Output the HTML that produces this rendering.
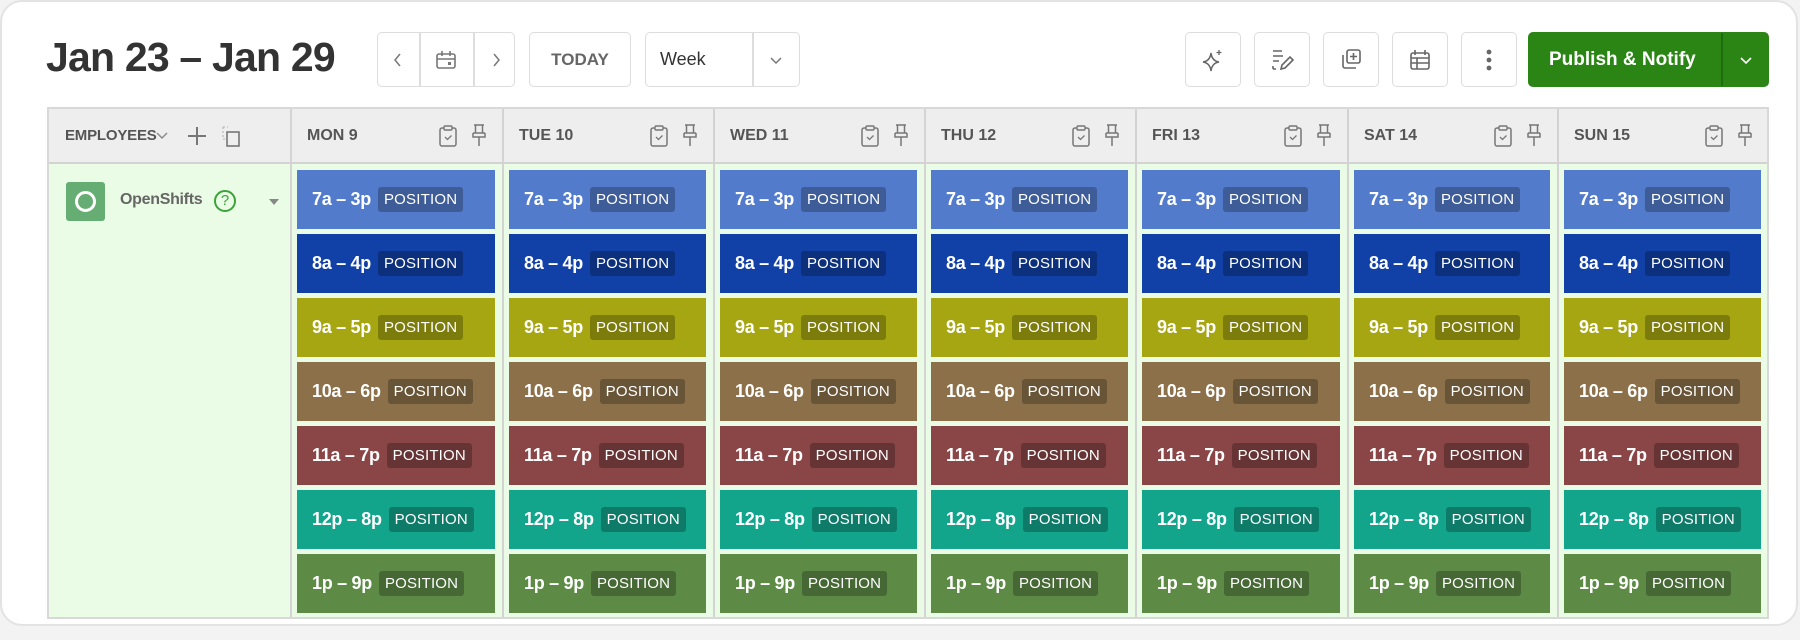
<!DOCTYPE html>
<html><head><meta charset="utf-8"><style>
*{box-sizing:border-box;margin:0;padding:0}
body{width:1800px;height:640px;background:#f3f3f3;font-family:"Liberation Sans",sans-serif;position:relative;overflow:hidden}
.card{position:absolute;left:0;top:0;width:1798px;height:626px;background:#fff;border:2px solid #e3e3e3;border-radius:22px;}
.abs{position:absolute}
.title{left:46px;top:34px;font-size:41px;font-weight:bold;color:#333;letter-spacing:-0.8px}
.btn{position:absolute;top:32px;height:55px;border:1.5px solid #ddd;border-radius:5px;background:#fff;display:flex;align-items:center;justify-content:center;color:#666}
.vd{position:absolute;top:0;bottom:0;width:1.5px;background:#ddd}
.grid{position:absolute;left:47px;top:107px;width:1722px;height:512px;border:2px solid #d8d8d8;background:#eafce5}
.hdr{position:absolute;left:0;top:0;right:0;height:55px;background:#eeeeee;border-bottom:2px solid #d3d3d3}
.col{position:absolute;top:0;bottom:0;border-left:2px solid #d3d3d3}
.dh{position:absolute;top:18px;font-size:16px;font-weight:bold;color:#555}
.shift{position:absolute;height:59px;color:#fff;display:flex;align-items:center;padding-left:15px;font-size:18px;font-weight:bold;letter-spacing:-0.3px;white-space:nowrap}
.badge{margin-left:7px;background:rgba(0,0,0,0.25);border-radius:3px;font-weight:normal;font-size:15px;padding:4px 6px;letter-spacing:0.2px}
svg{display:block}
</style></head><body>
<div class="card"></div>
<div class="abs title">Jan 23 – Jan 29</div>

<div class="btn" style="left:377px;width:138px">
 <div class="vd" style="left:41px"></div><div class="vd" style="left:95px"></div>
 <svg class="abs" style="left:14px;top:18px" width="12" height="18"><path d="M8 3 L3 9 L8 15" stroke="#777" stroke-width="1.5" fill="none"/></svg>
 <svg class="abs" style="left:56px;top:15px" width="24" height="24"><rect x="3" y="6" width="18" height="14" rx="2" stroke="#777" stroke-width="1.6" fill="none"/><path d="M3 11H21M8 3v5M16 3v5" stroke="#777" stroke-width="1.6"/><rect x="14" y="14" width="3" height="3" fill="#777"/></svg>
 <svg class="abs" style="left:112px;top:18px" width="12" height="18"><path d="M4 3 L9 9 L4 15" stroke="#777" stroke-width="1.5" fill="none"/></svg>
</div>
<div class="btn" style="left:529px;width:102px;font-size:17px;font-weight:bold;color:#666">TODAY</div>
<div class="btn" style="left:645px;width:155px;justify-content:flex-start;padding-left:14px;font-size:18px;color:#333">Week
 <div class="vd" style="left:106px"></div>
 <svg class="abs" style="left:122px;top:21px" width="16" height="12"><path d="M3 4 L8 9 L13 4" stroke="#777" stroke-width="1.5" fill="none"/></svg>
</div>

<div class="btn" style="left:1185px;width:56px"><svg width="26" height="26"><path d="M11 6 Q12 14 19 15 Q12 16 11 24 Q10 16 3 15 Q10 14 11 6Z" stroke="#666" stroke-width="1.5" fill="none"/><path d="M19 3v5M16.5 5.5h5" stroke="#666" stroke-width="1.3"/></svg></div>
<div class="btn" style="left:1254px;width:56px"><svg width="26" height="26"><path d="M4 4h9M4 9h10M4 14h6M4 19v3M4 22h3" stroke="#666" stroke-width="1.6" fill="none"/><path d="M12 22l1-4 8-8 3 3-8 8z" stroke="#666" stroke-width="1.6" fill="none"/></svg></div>
<div class="btn" style="left:1323px;width:56px"><svg width="26" height="26"><rect x="9" y="3" width="13" height="13" rx="2" stroke="#666" stroke-width="1.6" fill="none"/><path d="M15.5 6v7M12 9.5h7M5 8v11a2 2 0 0 0 2 2h11" stroke="#666" stroke-width="1.6" fill="none"/></svg></div>
<div class="btn" style="left:1392px;width:56px"><svg width="26" height="26"><rect x="4" y="6" width="18" height="16" rx="2" stroke="#666" stroke-width="1.6" fill="none"/><path d="M4 11h18M4 16h18M10 11v11M8 3v5M18 3v5" stroke="#666" stroke-width="1.6"/></svg></div>
<div class="btn" style="left:1461px;width:56px"><svg width="8" height="26"><circle cx="4" cy="5" r="2.4" fill="#666"/><circle cx="4" cy="13" r="2.4" fill="#666"/><circle cx="4" cy="21" r="2.4" fill="#666"/></svg></div>
<div class="btn" style="left:1528px;width:241px;background:#2a8515;border-color:#2a8515;color:#fff;justify-content:flex-start;padding-left:20px;font-size:19px;font-weight:bold">Publish &amp; Notify
 <div class="vd" style="left:192px;background:#1f6b10"></div>
 <svg class="abs" style="left:209px;top:21px" width="16" height="12"><path d="M3 4 L8 9 L13 4" stroke="#fff" stroke-width="1.6" fill="none"/></svg>
</div>

<div class="grid">
 <div class="hdr"></div>
 <div class="abs" style="left:16px;top:18px;font-size:15px;font-weight:bold;color:#555;letter-spacing:-0.2px">EMPLOYEES</div>
 <svg class="abs" style="left:106px;top:21px" width="14" height="12"><path d="M2 3 L7 8 L12 3" stroke="#888" stroke-width="1.4" fill="none"/></svg>
 <svg class="abs" style="left:137px;top:16px" width="22" height="22"><path d="M11 2v18M2 11h18" stroke="#777" stroke-width="2"/></svg>
 <svg class="abs" style="left:171px;top:16px" width="22" height="24"><path d="M3 2h5M3 2v12M3 14h3" stroke="#bbb" stroke-width="1.3" stroke-dasharray="2 2" fill="none"/><rect x="7" y="7" width="12" height="14" stroke="#777" stroke-width="1.6" fill="none"/></svg>
 <div class="abs" style="left:17px;top:73px;width:39px;height:39px;background:#65ad72;border-radius:3px"><div class="abs" style="left:9px;top:9px;width:21px;height:21px;border:3.5px solid #fff;border-radius:50%"></div></div>
 <div class="abs" style="left:71px;top:82px;font-size:16px;font-weight:bold;color:#666;letter-spacing:-0.3px">OpenShifts</div>
 <div class="abs" style="left:165px;top:81px;width:22px;height:22px;border:2px solid #3aa33a;border-radius:50%;color:#3aa33a;font-size:15px;text-align:center;line-height:18px">?</div>
 <div class="abs" style="left:220px;top:90px;width:0;height:0;border-left:5px solid transparent;border-right:5px solid transparent;border-top:6px solid #888"></div>
 <div id="cols"></div>
</div>
<script>
var xs=[290,502,713,924,1135,1347,1557,1768];
var days=["MON 9","TUE 10","WED 11","THU 12","FRI 13","SAT 14","SUN 15"];
var rows=[["7a – 3p","#527bcb"],["8a – 4p","#1140a6"],["9a – 5p","#a6a612"],["10a – 6p","#8b7049"],["11a – 7p","#8a4647"],["12p – 8p","#13a58c"],["1p – 9p","#5d8b46"]];
var h="";
for(var i=0;i<7;i++){
 var l=xs[i]-49,w=xs[i+1]-xs[i];
 h+='<div class="col" style="left:'+l+'px;width:'+w+'px">';
 h+='<div class="dh" style="left:15px">'+days[i]+'</div>';
 h+='<svg class="abs" style="left:'+(w-66)+'px;top:15px" width="22" height="24"><rect x="2" y="4" width="16" height="18" rx="2" stroke="#777" stroke-width="1.5" fill="none"/><rect x="6" y="2" width="8" height="4" rx="1" stroke="#777" stroke-width="1.4" fill="#eee"/><path d="M7 13l2.5 2.5 4-4" stroke="#777" stroke-width="1.3" fill="none"/></svg>';
 h+='<svg class="abs" style="left:'+(w-34)+'px;top:14px" width="18" height="26"><path d="M4 2h10M5.5 2v8M12.5 2v8M3 10h12M3 10v4h12v-4M9 14v9" stroke="#777" stroke-width="1.5" fill="none"/></svg>';
 for(var r=0;r<7;r++){
  h+='<div class="shift" style="left:5px;width:'+(w-14)+'px;top:'+(61+r*64)+'px;background:'+rows[r][1]+'">'+rows[r][0]+'<span class="badge">POSITION</span></div>';
 }
 h+='</div>';
}
document.getElementById("cols").innerHTML=h;
</script>
</body></html>
